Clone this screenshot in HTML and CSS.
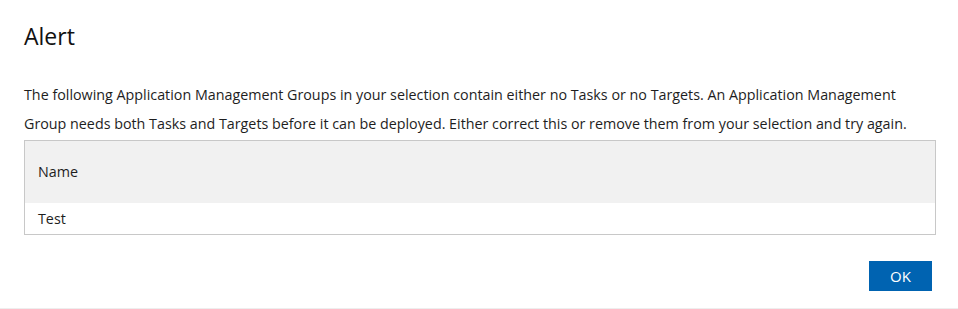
FILE: index.html
```html
<!DOCTYPE html>
<html lang="en">
	<head>
		<meta charset="utf-8">
		<title>Alert</title>
		<link rel="stylesheet" href="styles.css">
	</head>
	<body>
		<div class="dialog">
			<h1 class="dialog-title">Alert</h1>

			<p class="dialog-message">
				The following Application Management Groups in your selection contain either no Tasks or no Targets. An Application Management
				Group needs both Tasks and Targets before it can be deployed. Either correct this or remove them from your selection and try again.
			</p>

			<table class="grid">
				<thead>
					<tr><th>Name</th></tr>
				</thead>
				<tbody>
					<tr><td>Test</td></tr>
				</tbody>
			</table>

			<div class="dialog-buttons">
				<button class="btn-primary">OK</button>
			</div>
		</div>
	</body>
</html>
```

FILE: styles.css
```css
* {
	padding: 0;
	margin: 0;
	box-sizing: border-box;
}

body {
	font-family: 'Open Sans', 'Noto Sans', sans-serif;
	color: #222;
	background: #fff;
}

/* Dialog frame */
.dialog {
	width: 958px;
	height: 309px;
	padding: 20px 23px 0 24px;
	border-bottom: 1px solid #eee;
}

.dialog-title {
	font-size: 23px;
	font-weight: normal;
	line-height: 32px;
	color: #111;
}

.dialog-message {
	margin-top: 28px;
	font-size: 14.3px;
	line-height: 29px;
	color: #1e1e1e;
	width: 900px;
}

/* Results grid */
.grid {
	width: 912px;
	margin-top: 2px;
	border-collapse: collapse;
	border: 1px solid #c8c8c8;
	font-size: 14.3px;
	color: #1e1e1e;
}

.grid th {
	background: #f1f1f1;
	text-align: left;
	font-weight: normal;
	height: 62px;
	padding: 0 13px;
}

.grid td {
	height: 32px;
	padding: 0 13px;
	background: #fff;
}

/* Buttons */
.dialog-buttons {
	display: flex;
	justify-content: flex-end;
	margin-top: 26px;
	padding-right: 3px;
}

.btn-primary {
	width: 63px;
	height: 30px;
	border: 0;
	background: #0063b1;
	color: #fff;
	font-family: inherit;
	font-size: 15px;
}
```
